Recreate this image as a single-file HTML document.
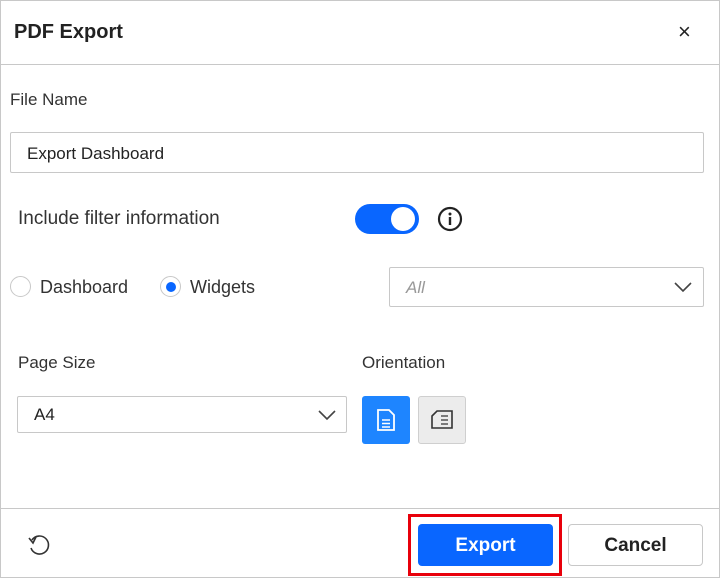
<!DOCTYPE html>
<html><head><style>
*{box-sizing:border-box;margin:0;padding:0}
body{width:720px;height:578px;background:#fff;font-family:"Liberation Sans",sans-serif;color:#333;position:relative;overflow:hidden}
.abs{position:absolute}
.frame{left:0;top:0;width:720px;height:578px;border:1px solid #c8c8c8}
</style></head><body>
<div class="abs frame"></div>
<div class="abs" style="left:14px;top:21px;font-size:20px;font-weight:bold;color:#222">PDF Export</div>
<div class="abs" style="left:678px;top:19px;font-size:22px;color:#222">×</div>
<div class="abs" style="left:0;top:64px;width:720px;height:1px;background:#c8c8c8"></div>
<div class="abs" style="left:10px;top:90px;font-size:17px;color:#333">File Name</div>
<div class="abs" style="left:10px;top:132px;width:694px;height:41px;border:1px solid #c8c8c8;border-radius:2px;padding:11px 16px;font-size:17px;color:#222">Export Dashboard</div>
<div class="abs" style="left:18px;top:208px;font-size:19px;color:#333">Include filter information</div>
<div class="abs" style="left:355px;top:204px;width:64px;height:30px;border-radius:15px;background:#0966ff"></div>
<div class="abs" style="left:391px;top:207px;width:24px;height:24px;border-radius:50%;background:#fff"></div>
<svg class="abs" style="left:437px;top:206px" width="26" height="26" viewBox="0 0 26 26"><circle cx="13" cy="13" r="11" fill="none" stroke="#222" stroke-width="2.2"/><circle cx="13" cy="8" r="1.5" fill="#222"/><rect x="11.8" y="11" width="2.4" height="8" fill="#222"/></svg>
<div class="abs" style="left:10px;top:276px;width:21px;height:21px;border:1px solid #c8c8c8;border-radius:50%"></div>
<div class="abs" style="left:40px;top:277px;font-size:18px;color:#333">Dashboard</div>
<div class="abs" style="left:160px;top:276px;width:21px;height:21px;border:1px solid #c8c8c8;border-radius:50%"></div>
<div class="abs" style="left:166px;top:282px;width:10px;height:10px;border-radius:50%;background:#0966ff"></div>
<div class="abs" style="left:190px;top:277px;font-size:18px;color:#333">Widgets</div>
<div class="abs" style="left:389px;top:267px;width:315px;height:40px;border:1px solid #c8c8c8;border-radius:2px;padding:10px 16px;font-size:17px;color:#999;font-style:italic">All</div>
<svg class="abs" style="left:674px;top:281px" width="18" height="12"><path d="M1 2 L9 10 L17 2" fill="none" stroke="#444" stroke-width="1.6"/></svg>
<div class="abs" style="left:18px;top:353px;font-size:17px;color:#333">Page Size</div>
<div class="abs" style="left:362px;top:353px;font-size:17px;color:#333">Orientation</div>
<div class="abs" style="left:17px;top:396px;width:330px;height:37px;border:1px solid #c8c8c8;border-radius:2px;padding:8px 16px;font-size:17px;color:#222">A4</div>
<svg class="abs" style="left:318px;top:409px" width="18" height="12"><path d="M1 2 L9 10 L17 2" fill="none" stroke="#444" stroke-width="1.6"/></svg>
<div class="abs" style="left:362px;top:396px;width:48px;height:48px;border-radius:3px;background:#1e85ff"></div>
<svg class="abs" style="left:374px;top:408px" width="24" height="24" viewBox="0 0 24 24"><path d="M4 2 H15 L20 7 V22 H4 Z" fill="none" stroke="#fff" stroke-width="1.8"/><path d="M8 12H16M8 15.5H16M8 19H16" stroke="#fff" stroke-width="1.6"/></svg>
<div class="abs" style="left:418px;top:396px;width:48px;height:48px;border-radius:3px;background:#ececec;border:1px solid #cfcfcf"></div>
<svg class="abs" style="left:428px;top:408px" width="28" height="24" viewBox="0 0 28 24"><path d="M4 8 L9 3 H24 V20 H4 Z" fill="none" stroke="#333" stroke-width="1.6"/><path d="M13 8H20M13 12H20M13 16H20" stroke="#555" stroke-width="1.4"/></svg>
<div class="abs" style="left:0;top:508px;width:720px;height:1px;background:#c8c8c8"></div>
<svg class="abs" style="left:26px;top:533px" width="26" height="26" viewBox="0 0 26 26"><path d="M6 7 A9 9 0 1 1 5 15" fill="none" stroke="#333" stroke-width="1.6"/><path d="M3 5 L7 10 L10 4" fill="none" stroke="#333" stroke-width="1.6"/></svg>
<div class="abs" style="left:408px;top:514px;width:154px;height:62px;border:3px solid #e8000b"></div>
<div class="abs" style="left:418px;top:524px;width:135px;height:42px;border-radius:4px;background:#0966ff;color:#fff;font-size:19px;font-weight:bold;text-align:center;line-height:44px">Export</div>
<div class="abs" style="left:568px;top:524px;width:135px;height:42px;border-radius:4px;border:1px solid #c8c8c8;color:#222;font-size:19px;font-weight:bold;text-align:center;line-height:42px">Cancel</div>
</body></html>
